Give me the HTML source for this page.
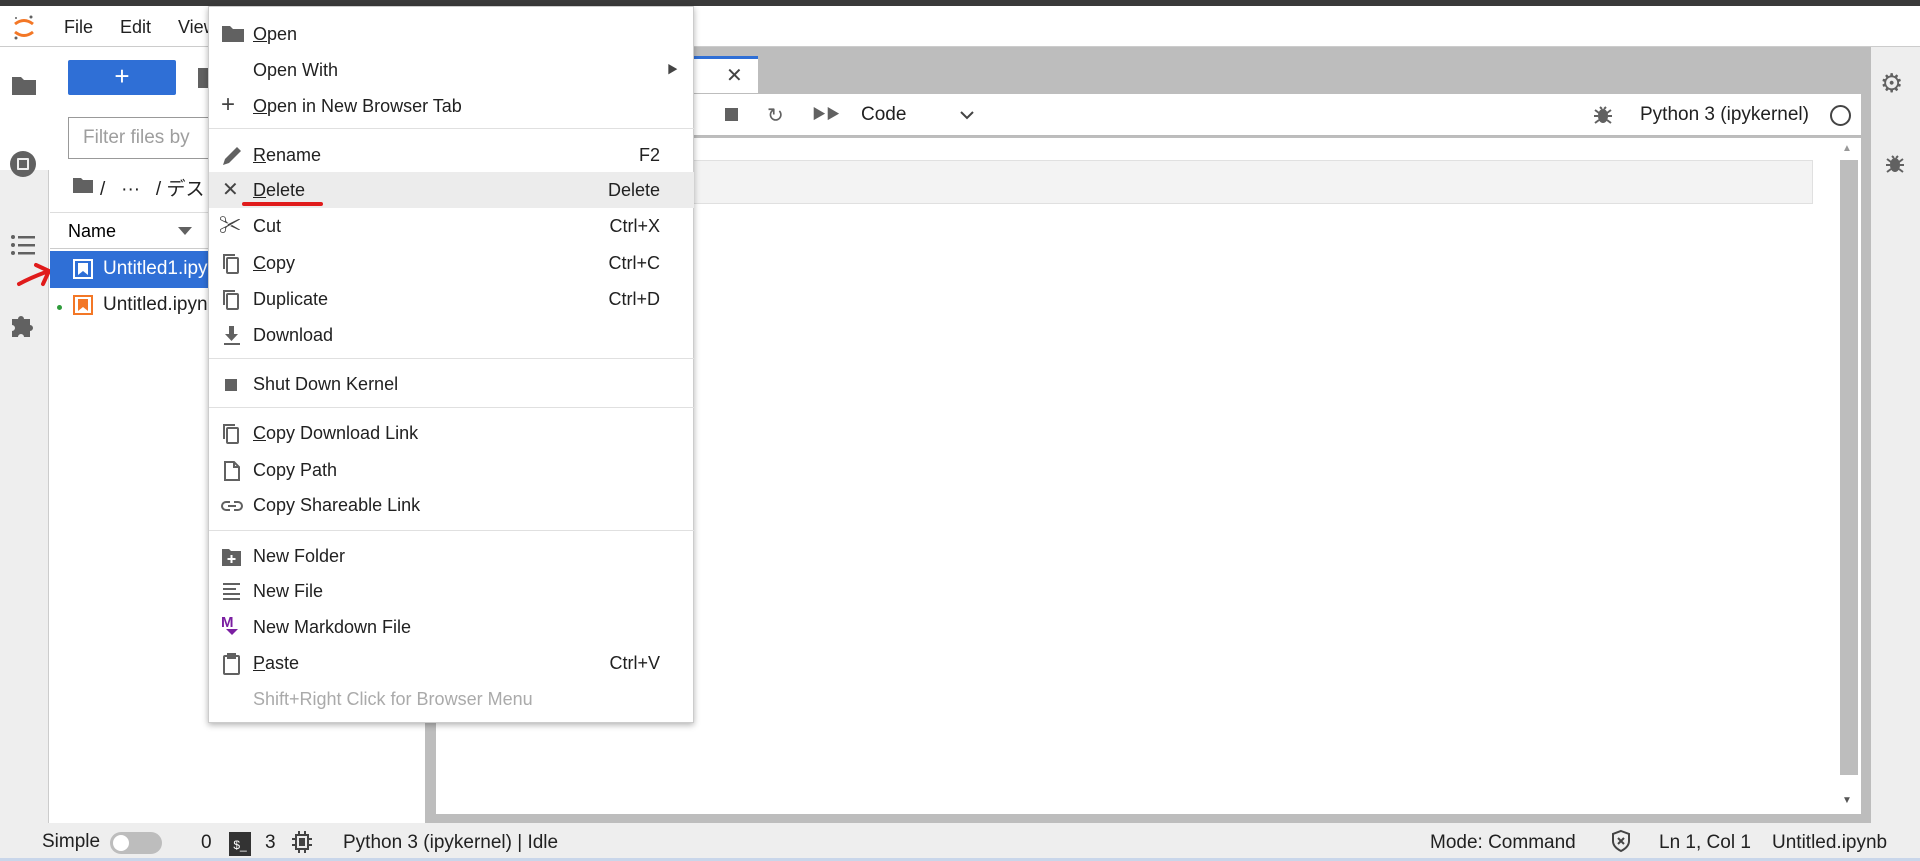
<!DOCTYPE html>
<html><head><meta charset="utf-8"><style>
*{box-sizing:border-box;margin:0;padding:0}
body{width:1920px;height:861px;overflow:hidden;position:relative;background:#fff;font-family:"Liberation Sans","Noto Sans CJK JP",sans-serif;color:#212121}
.a{position:absolute}
.t{position:absolute;white-space:nowrap}
.mi{position:absolute;left:0;width:485px;height:36px;font-size:18px;line-height:36px}
.mi .l{position:absolute;left:44px}
.mi .s{position:absolute;right:34px}
.mi svg{position:absolute;left:12px;top:8px}
.sep{position:absolute;left:0;width:485px;height:1px;background:#e0e0e0}
u{text-decoration:underline}
</style></head><body>
<div class="a" style="left:0;top:0;width:1920px;height:6px;background:#3a3a3a"></div>
<div class="a" style="left:0;top:6px;width:1920px;height:41px;background:#fff;border-bottom:1px solid #ccc"></div>
<svg class="a" style="left:12px;top:12px" width="24" height="30" viewBox="0 0 24 30"><path d="M3 12 Q12 5 21 12" stroke="#f37726" stroke-width="3" fill="none"/><path d="M3 20 Q12 27 21 20" stroke="#f37726" stroke-width="3" fill="none"/><circle cx="19" cy="5" r="1.5" fill="#616161"/><circle cx="4" cy="26" r="1.5" fill="#616161"/><circle cx="4" cy="6" r="1" fill="#616161"/></svg>
<div class="t" style="left:64px;top:17px;font-size:18px">File</div>
<div class="t" style="left:120px;top:17px;font-size:18px">Edit</div>
<div class="t" style="left:178px;top:17px;font-size:18px">View</div>
<div class="a" style="left:0;top:47px;width:49px;height:776px;background:#eeeeee;border-right:1px solid #ccc"></div>
<div class="a" style="left:0;top:47px;width:50px;height:123px;background:#fff"></div>
<svg class="a" style="left:11px;top:74px" width="26" height="22"><path d="M1 3h9l3 3h12v15H1z" fill="#616161"/></svg>
<svg class="a" style="left:9px;top:150px" width="28" height="28"><circle cx="14" cy="14" r="13" fill="#616161"/><rect x="8" y="8" width="12" height="12" fill="#eee" rx="1"/><rect x="10" y="10" width="8" height="8" fill="#616161"/></svg>
<svg class="a" style="left:10px;top:234px" width="26" height="22" fill="#616161"><circle cx="3" cy="3" r="2"/><circle cx="3" cy="11" r="2"/><circle cx="3" cy="19" r="2"/><rect x="8" y="2" width="17" height="2.5"/><rect x="8" y="10" width="17" height="2.5"/><rect x="8" y="18" width="17" height="2.5"/></svg>
<svg class="a" style="left:10px;top:311px" width="28" height="28" fill="#616161"><path d="M2 8h6a3 3 0 1 1 6 0h6v6a3 3 0 1 1 0 6v6h-6a3 3 0 1 0-6 0H2v-6a3 3 0 1 0 0-6z"/></svg>
<svg class="a" style="left:16px;top:258px" width="36" height="30"><path d="M3 26 Q14 20 30 14 M20 7 L33 13 L27 26" stroke="#e01b1b" stroke-width="4" fill="none" stroke-linecap="round"/></svg>
<div class="a" style="left:68px;top:60px;width:108px;height:35px;background:#2f6fd6;border-radius:2px;color:#fff;font-size:26px;text-align:center;line-height:33px">+</div>
<div class="a" style="left:198px;top:68px;width:12px;height:20px;background:#616161"></div>
<div class="a" style="left:68px;top:117px;width:200px;height:42px;border:1px solid #999;color:#9e9e9e;font-size:19px;line-height:40px;padding-left:14px">Filter files by</div>
<svg class="a" style="left:73px;top:176px" width="22" height="18"><path d="M0 2h8l2 2h10v13H0z" fill="#616161"/></svg>
<div class="t" style="left:100px;top:174px;font-size:19px">/ &nbsp; ··· &nbsp; / デス</div>
<div class="a" style="left:50px;top:212px;width:375px;height:1px;background:#ddd"></div>
<div class="t" style="left:68px;top:221px;font-size:18px;color:#000">Name</div>
<svg class="a" style="left:178px;top:227px" width="14" height="8"><path d="M0 0h14L7 8z" fill="#616161"/></svg>
<div class="a" style="left:50px;top:248px;width:375px;height:1px;background:#ccc"></div>
<div class="a" style="left:50px;top:251px;width:375px;height:37px;background:#2f6fd6"></div>
<svg class="a" style="left:73px;top:259px" width="20" height="20"><rect x="1" y="1" width="18" height="18" fill="none" stroke="#fff" stroke-width="2"/><path d="M5 4h10v12l-5-4-5 4z" fill="#fff"/></svg>
<div class="t" style="left:103px;top:258px;font-size:19px;color:#fff">Untitled1.ipynb</div>
<div class="a" style="left:57px;top:305px;width:5px;height:5px;border-radius:50%;background:#2e9b3a"></div>
<svg class="a" style="left:73px;top:295px" width="20" height="20"><rect x="1" y="1" width="18" height="18" fill="none" stroke="#f37726" stroke-width="2"/><path d="M5 4h10v12l-5-4-5 4z" fill="#f37726"/></svg>
<div class="t" style="left:103px;top:294px;font-size:19px">Untitled.ipynb</div>
<div class="a" style="left:425px;top:47px;width:1446px;height:776px;background:#bdbdbd"></div>
<div class="a" style="left:598px;top:56px;width:160px;height:37px;background:#fff;border-top:3px solid #2f6fd6"></div>
<div class="t" style="left:726px;top:63px;font-size:20px;color:#444">✕</div>
<div class="a" style="left:436px;top:94px;width:1425px;height:42px;background:#fff;border-bottom:1px solid #bbb"></div>
<div class="a" style="left:725px;top:108px;width:13px;height:13px;background:#616161"></div>
<div class="t" style="left:767px;top:103px;font-size:20px;color:#616161">↻</div>
<div class="t" style="left:812px;top:104px;font-size:14px;color:#616161">▶▶</div>
<div class="t" style="left:861px;top:104px;font-size:19px">Code</div>
<svg class="a" style="left:960px;top:111px" width="14" height="9"><path d="M1 1l6 6 6-6" stroke="#444" stroke-width="2" fill="none"/></svg>
<svg class="a" style="left:1594px;top:104px" width="18" height="22" fill="#616161"><ellipse cx="9" cy="12" rx="5" ry="7"/><path d="M1 6l4 3M17 6l-4 3M0 12h4M14 12h4M1 19l4-3M17 19l-4-3M6 3l2 2M12 3l-2 2" stroke="#616161" stroke-width="2"/></svg>
<div class="t" style="left:1640px;top:104px;font-size:19px">Python 3 (ipykernel)</div>
<div class="a" style="left:1830px;top:105px;width:21px;height:21px;border:2px solid #444;border-radius:50%"></div>
<div class="a" style="left:436px;top:138px;width:1425px;height:676px;background:#fff"></div>
<div class="a" style="left:436px;top:160px;width:1377px;height:44px;background:#f3f3f3;border:1px solid #e0e0e0"></div>
<div class="a" style="left:1840px;top:160px;width:18px;height:615px;background:#bdbdbd"></div>
<div class="t" style="left:1842px;top:143px;font-size:10px;color:#999">▲</div>
<div class="t" style="left:1842px;top:795px;font-size:10px;color:#555">▼</div>
<div class="a" style="left:1871px;top:47px;width:49px;height:776px;background:#eeeeee"></div>
<div class="t" style="left:1880px;top:68px;font-size:26px;color:#616161">⚙</div>
<svg class="a" style="left:1886px;top:153px" width="18" height="22" fill="#616161"><ellipse cx="9" cy="12" rx="5" ry="7"/><path d="M1 6l4 3M17 6l-4 3M0 12h4M14 12h4M1 19l4-3M17 19l-4-3M6 3l2 2M12 3l-2 2" stroke="#616161" stroke-width="2"/></svg>
<div class="a" style="left:0;top:823px;width:1920px;height:38px;background:#eeeeee"></div>
<div class="a" style="left:0;top:858px;width:1920px;height:3px;background:#c9d6ea"></div>
<div class="t" style="left:42px;top:831px;font-size:19px">Simple</div>
<div class="a" style="left:110px;top:832px;width:52px;height:22px;border-radius:11px;background:#bdbdbd"></div>
<div class="a" style="left:113px;top:835px;width:16px;height:16px;border-radius:50%;background:#fff"></div>
<div class="t" style="left:201px;top:832px;font-size:19px">0</div>
<div class="a" style="left:229px;top:832px;width:22px;height:24px;background:#333;color:#fff;font-size:12px;line-height:26px;text-align:center">$_</div>
<div class="t" style="left:265px;top:832px;font-size:19px">3</div>
<svg class="a" style="left:292px;top:831px" width="20" height="22" fill="none" stroke="#444" stroke-width="2"><rect x="4" y="4" width="12" height="14"/><rect x="8" y="8" width="4" height="6" fill="#444"/><path d="M0 8h4M0 14h4M16 8h4M16 14h4M7 0v4M13 0v4M7 18v4M13 18v4"/></svg>
<div class="t" style="left:343px;top:832px;font-size:19px">Python 3 (ipykernel) | Idle</div>
<div class="t" style="left:1430px;top:832px;font-size:19px">Mode: Command</div>
<svg class="a" style="left:1610px;top:829px" width="22" height="24" fill="none" stroke="#444" stroke-width="2"><path d="M11 2l8 3v7c0 5-4 8-8 10-4-2-8-5-8-10V5z"/><path d="M8 9l6 6M14 9l-6 6"/></svg>
<div class="t" style="left:1659px;top:832px;font-size:19px">Ln 1, Col 1</div>
<div class="t" style="left:1772px;top:832px;font-size:19px">Untitled.ipynb</div>
<div class="a" style="left:208px;top:6px;width:486px;height:717px;background:#fff;border:1px solid #ccc;box-shadow:0 2px 6px rgba(0,0,0,.3)">
<div class="mi" style="top:9px"><svg width="24" height="20"><path d="M1 2h8l3 3h11v13H1z" fill="#616161"/></svg><span class="l"><u>O</u>pen</span></div>
<div class="mi" style="top:45px"><span class="l">Open With</span><span class="s" style="right:16px;font-size:11px;color:#444">▶</span></div>
<div class="mi" style="top:81px"><span class="t" style="left:12px;top:-1px;font-size:24px;color:#444">+</span><span class="l"><u>O</u>pen in New Browser Tab</span></div>
<div class="sep" style="top:121px"></div>
<div class="mi" style="top:130px"><svg width="22" height="22"><path d="M2 20l2-6 12-12 4 4-12 12z" fill="#616161"/></svg><span class="l"><u>R</u>ename</span><span class="s">F2</span></div>
<div class="mi" style="top:165px;background:#ececec"><span class="t" style="left:13px;top:0;font-size:20px;color:#444">✕</span><span class="l"><u>D</u>elete</span><span class="s">Delete</span></div>
<div class="a" style="left:33px;top:195px;width:81px;height:4px;background:#e01b1b;border-radius:2px"></div>
<div class="mi" style="top:201px"><span class="t" style="left:10px;top:0;font-size:22px;color:#444">✂</span><span class="l">Cut</span><span class="s">Ctrl+X</span></div>
<div class="mi" style="top:238px"><svg width="22" height="22" fill="none" stroke="#616161" stroke-width="2"><path d="M3 16V2h11"/><rect x="6" y="5" width="11" height="15" rx="1"/></svg><span class="l"><u>C</u>opy</span><span class="s">Ctrl+C</span></div>
<div class="mi" style="top:274px"><svg width="22" height="22" fill="none" stroke="#616161" stroke-width="2"><path d="M3 16V2h11"/><rect x="6" y="5" width="11" height="15" rx="1"/></svg><span class="l">Duplicate</span><span class="s">Ctrl+D</span></div>
<div class="mi" style="top:310px"><svg width="22" height="22" fill="#616161"><path d="M8 1h5v8h4l-6.5 7L4 9h4z"/><rect x="3" y="18" width="16" height="2"/></svg><span class="l">Download</span></div>
<div class="sep" style="top:351px"></div>
<div class="mi" style="top:359px"><svg width="22" height="22"><rect x="4" y="5" width="12" height="12" fill="#616161"/></svg><span class="l">Shut Down Kernel</span></div>
<div class="sep" style="top:400px"></div>
<div class="mi" style="top:408px"><svg width="22" height="22" fill="none" stroke="#616161" stroke-width="2"><path d="M3 16V2h11"/><rect x="6" y="5" width="11" height="15" rx="1"/></svg><span class="l"><u>C</u>opy Download Link</span></div>
<div class="mi" style="top:445px"><svg width="22" height="22" fill="none" stroke="#616161" stroke-width="2"><path d="M4 2h9l5 5v13H4z M13 2v5h5"/></svg><span class="l">Copy Path</span></div>
<div class="mi" style="top:480px"><svg width="22" height="22" fill="none" stroke="#616161" stroke-width="2"><path d="M9 7H5a4 4 0 0 0 0 8h4M13 7h4a4 4 0 0 1 0 8h-4M7 11h8"/></svg><span class="l">Copy Shareable Link</span></div>
<div class="sep" style="top:523px"></div>
<div class="mi" style="top:531px"><svg width="22" height="22"><path d="M1 3h7l2 2h10v15H1z" fill="#616161"/><path d="M10.5 9v8M6.5 13h8" stroke="#fff" stroke-width="2"/></svg><span class="l">New Folder</span></div>
<div class="mi" style="top:566px"><svg width="22" height="22" fill="#616161"><rect x="2" y="2" width="17" height="2"/><rect x="2" y="7" width="13" height="2"/><rect x="2" y="12" width="17" height="2"/><rect x="2" y="17" width="17" height="2"/></svg><span class="l">New File</span></div>
<div class="mi" style="top:602px"><span class="t" style="left:12px;top:-4px;font-size:15px;font-weight:bold;color:#7b1fa2">M</span><svg width="22" height="22" style="top:20px"><path d="M5 0h12l-6 6z" fill="#7b1fa2"/></svg><span class="l">New Markdown File</span></div>
<div class="mi" style="top:638px"><svg width="22" height="22" fill="none" stroke="#616161" stroke-width="2"><rect x="3" y="3" width="15" height="18" rx="1"/><rect x="7" y="1" width="7" height="4" fill="#616161"/></svg><span class="l"><u>P</u>aste</span><span class="s">Ctrl+V</span></div>
<div class="mi" style="top:674px;color:#aaa"><span class="l">Shift+Right Click for Browser Menu</span></div>
</div>
</body></html>
